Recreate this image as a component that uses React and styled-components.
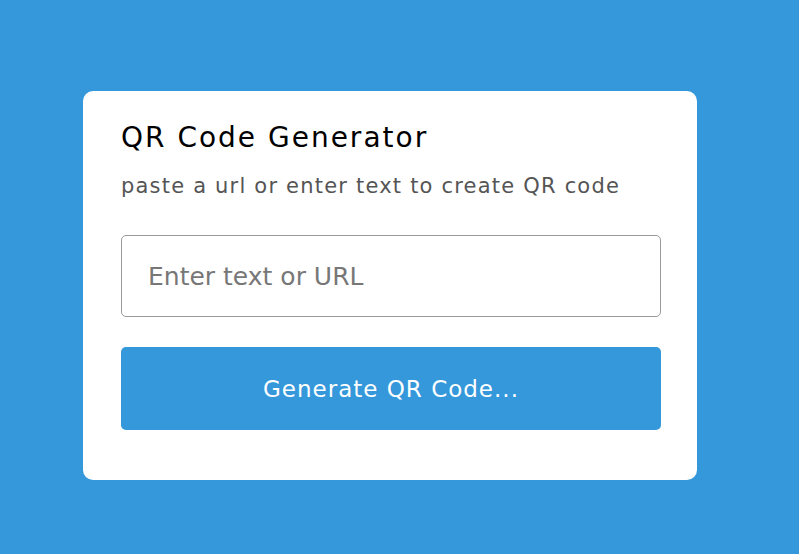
import React from "react";
import styled, { createGlobalStyle } from "styled-components";

const GlobalStyle = createGlobalStyle`
  * { box-sizing: border-box; }
  html, body {
    margin: 0;
    padding: 0;
    background: #3498db;
    font-family: "DejaVu Sans", "Open Sans", sans-serif;
  }
`;

const Page = styled.div`
  min-height: 554px;
  padding: 91px 0 0 83px;
`;

const Card = styled.div`
  width: 614px;
  background: #fff;
  border-radius: 10px;
  padding: 25px 36px 50px 38px;
`;

const Title = styled.h1`
  margin: 0;
  font-size: 28px;
  font-weight: 400;
  letter-spacing: 2px;
  color: #000;
  line-height: 44px;
`;

const Subtitle = styled.p`
  margin: 11px 0 0;
  font-size: 21px;
  letter-spacing: 1.2px;
  color: #555;
  line-height: 30px;
`;

const Input = styled.input`
  display: block;
  width: 100%;
  height: 82px;
  margin-top: 34px;
  padding: 0 26px;
  border: 1px solid #999;
  border-radius: 5px;
  font-family: inherit;
  font-size: 25px;
  color: #333;
  caret-color: #000;
  outline: none;

  &::placeholder {
    color: #777;
  }
`;

const Button = styled.button`
  display: block;
  width: 100%;
  height: 83px;
  margin-top: 30px;
  border: none;
  border-radius: 5px;
  background: #3498db;
  color: #fff;
  font-family: inherit;
  font-size: 23px;
  letter-spacing: 1px;
  cursor: pointer;
`;

export default function App() {
  return (
    <>
      <GlobalStyle />
      <Page>
        <Card>
          <Title>QR Code Generator</Title>
          <Subtitle>paste a url or enter text to create QR code</Subtitle>
          <Input type="text" placeholder="Enter text or URL" autoFocus />
          <Button>Generate QR Code...</Button>
        </Card>
      </Page>
    </>
  );
}
